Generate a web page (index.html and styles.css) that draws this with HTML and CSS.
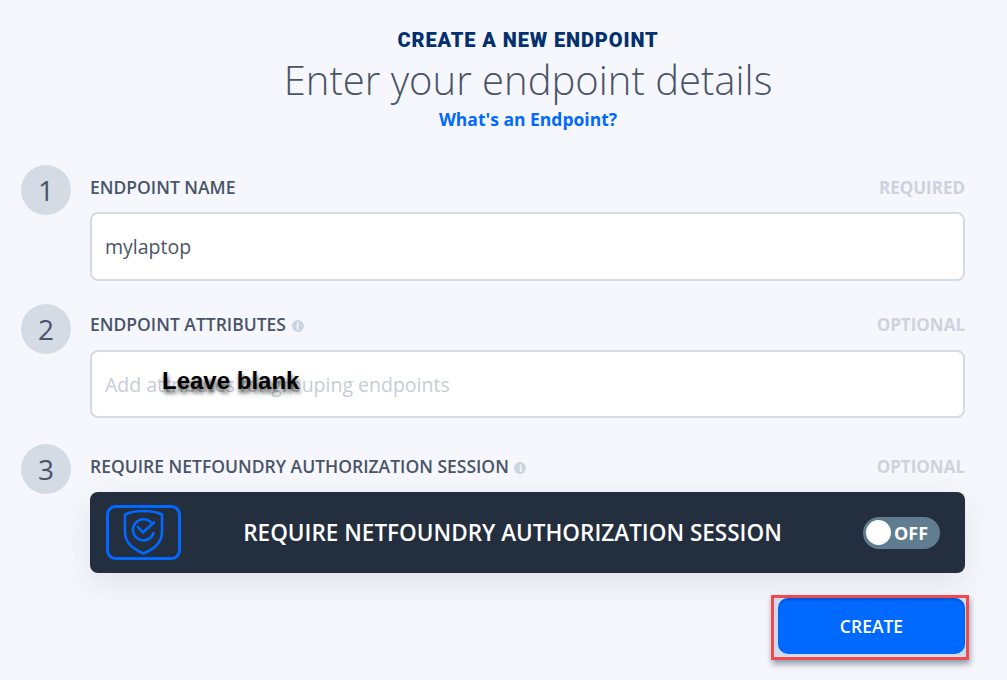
FILE: index.html
```html
<!DOCTYPE html>
<html lang="en">
<head>
    <meta charset="UTF-8">
    <title>Create a new endpoint</title>
    <link rel="stylesheet" href="styles.css">
</head>
<body>
    <div class="page">
        <div class="header">
            <div class="eyebrow">CREATE A NEW ENDPOINT</div>
            <h1>Enter your endpoint details</h1>
            <a href="#" class="help-link">What's an Endpoint?</a>
        </div>

        <!-- Step 1 -->
        <div class="step step-name">
            <div class="step-number">1</div>
            <div class="step-body">
                <div class="label-row">
                    <span class="label">ENDPOINT NAME</span>
                    <span class="hint">REQUIRED</span>
                </div>
                <input class="text-input" type="text" value="mylaptop">
            </div>
        </div>

        <!-- Step 2 -->
        <div class="step step-attrs">
            <div class="step-number">2</div>
            <div class="step-body">
                <div class="label-row">
                    <span class="label">ENDPOINT ATTRIBUTES <span class="info">i</span></span>
                    <span class="hint">OPTIONAL</span>
                </div>
                <div class="input-wrap">
                    <input class="text-input" type="text" placeholder="Add attributes for grouping endpoints">
                    <span class="callout">Leave blank</span>
                </div>
            </div>
        </div>

        <!-- Step 3 -->
        <div class="step step-auth">
            <div class="step-number">3</div>
            <div class="step-body">
                <div class="label-row">
                    <span class="label">REQUIRE NETFOUNDRY AUTHORIZATION SESSION <span class="info">i</span></span>
                    <span class="hint">OPTIONAL</span>
                </div>
                <div class="auth-panel">
                    <svg class="auth-icon" viewBox="0 0 75 55" fill="none" stroke="#0069ff" stroke-width="2.6" stroke-linecap="round" stroke-linejoin="round">
                        <rect x="1.5" y="1.5" width="72" height="52" rx="8" stroke-width="3"/>
                        <path d="M37.5 6 C31 6 24 7 19 9.5 V27 C19 38 29 45 37.5 48.5 C46 45 56 38 56 27 V9.5 C51 7 44 6 37.5 6Z"/>
                        <path d="M45.5 18 A10.5 10.5 0 1 0 47.5 28"/>
                        <path d="M32 22 L37 27.5 L48 17.5"/>
                    </svg>
                    <div class="auth-title">REQUIRE NETFOUNDRY AUTHORIZATION SESSION</div>
                    <div class="toggle">
                        <span class="toggle-knob"></span>
                        <span>OFF</span>
                    </div>
                </div>
            </div>
        </div>

        <div class="actions">
            <div class="highlight">
                <button class="create-btn">CREATE</button>
            </div>
        </div>
    </div>
</body>
</html>
```

FILE: styles.css
```css
body {
    margin: 0;
    background-color: #f5f7fc;
    font-family: "Open Sans", sans-serif;
    color: #4a5468;
}
.page {
    height: 680px;
    box-sizing: border-box;
    padding: 28px 42px 0 21px;
    overflow: hidden;
}
.header {
    text-align: center;
    margin-left: 28px;
    margin-right: -42px;
    height: 137px;
}
.eyebrow {
    padding-top: 1px;
    font-family: Roboto, sans-serif;
    font-weight: 900;
    font-size: 20px;
    line-height: 22px;
    letter-spacing: 0.9px;
    color: #03306f;
}
h1 {
    margin: 2px 0 0;
    font-weight: 300;
    font-size: 40px;
    line-height: 54px;
    color: #4a5468;
}
.help-link {
    display: block;
    margin-top: 1px;
    font-weight: 700;
    font-size: 17.5px;
    line-height: 22px;
    color: #0069ff;
    text-decoration: none;
}
.step {
    display: grid;
    grid-template-columns: 50px 1fr;
    column-gap: 19px;
}
.step-name {
    margin-bottom: 23px;
}
.step-attrs {
    margin-bottom: 26px;
}
.step-auth {
    margin-bottom: 22px;
}
.step-number {
    width: 50px;
    height: 50px;
    border-radius: 50%;
    background-color: #d5dbe5;
    font-size: 28px;
    line-height: 50px;
    text-align: center;
    color: #4a5468;
}
.label-row {
    display: flex;
    justify-content: space-between;
    align-items: center;
    height: 22px;
    margin-top: 11px;
    margin-bottom: 14px;
}
.step-attrs .label-row {
    margin-top: 9px;
    margin-bottom: 15px;
}
.step-auth .label-row {
    margin-top: 11px;
    margin-bottom: 15px;
}
.label {
    font-weight: 600;
    font-size: 17.5px;
    color: #4a5468;
}
.hint {
    font-weight: 700;
    font-size: 17px;
    color: #cdd3de;
}
.info {
    display: inline-block;
    width: 12px;
    height: 12px;
    margin-left: 1px;
    border-radius: 50%;
    background-color: #cdd4e0;
    color: #f5f7fc;
    font-size: 10px;
    font-weight: 700;
    line-height: 12px;
    text-align: center;
    vertical-align: 1px;
}
.text-input {
    display: block;
    width: 100%;
    height: 69px;
    box-sizing: border-box;
    padding: 0 13px;
    border: 2px solid #d5dbe5;
    border-radius: 8px;
    background-color: #fff;
    font-family: "Open Sans", sans-serif;
    font-size: 19.5px;
    color: #4a5468;
    outline: none;
}
.step-attrs .text-input {
    height: 68px;
}
.text-input::placeholder {
    color: #c6cdd9;
    opacity: 1;
}
.input-wrap {
    position: relative;
}
.callout {
    position: absolute;
    left: 72px;
    top: 18px;
    font-family: "Liberation Sans", sans-serif;
    font-weight: 700;
    font-size: 24px;
    line-height: 26px;
    white-space: nowrap;
    color: #000;
    text-shadow: 1px 4px 4px rgba(0, 0, 0, 0.7);
}
.auth-panel {
    display: flex;
    align-items: center;
    height: 81px;
    padding: 0 25px 0 16px;
    border-radius: 8px;
    background-color: #232e3e;
    box-shadow: 0 10px 30px rgba(40, 50, 80, 0.1);
}
.auth-icon {
    width: 75px;
    height: 55px;
    flex-shrink: 0;
}
.auth-title {
    flex: 1;
    padding-right: 19px;
    text-align: center;
    white-space: nowrap;
    font-weight: 600;
    font-size: 22.5px;
    color: #fff;
}
.toggle {
    display: flex;
    align-items: center;
    gap: 3px;
    width: 77px;
    height: 32px;
    flex-shrink: 0;
    box-sizing: border-box;
    padding-left: 3px;
    border-radius: 16px;
    background-color: #607d8f;
    font-weight: 700;
    font-size: 18px;
    color: #fff;
}
.toggle-knob {
    width: 25px;
    height: 25px;
    border-radius: 50%;
    background-color: #fff;
}
.actions {
    display: flex;
    justify-content: flex-end;
    margin-right: -4px;
}
.highlight {
    padding: 0 1px 3px 4px;
    border: 3px solid #f04a4f;
    background-color: #cfdaec;
    box-shadow: 1px 4px 6px rgba(50, 60, 90, 0.5);
}
.create-btn {
    display: block;
    width: 187px;
    height: 56px;
    border: none;
    border-radius: 10px;
    background-color: #0069ff;
    box-shadow: inset 0 2px 2px rgba(0, 40, 120, 0.3);
    font-family: "Open Sans", sans-serif;
    font-weight: 600;
    font-size: 17.5px;
    color: #fff;
    cursor: pointer;
}
```
